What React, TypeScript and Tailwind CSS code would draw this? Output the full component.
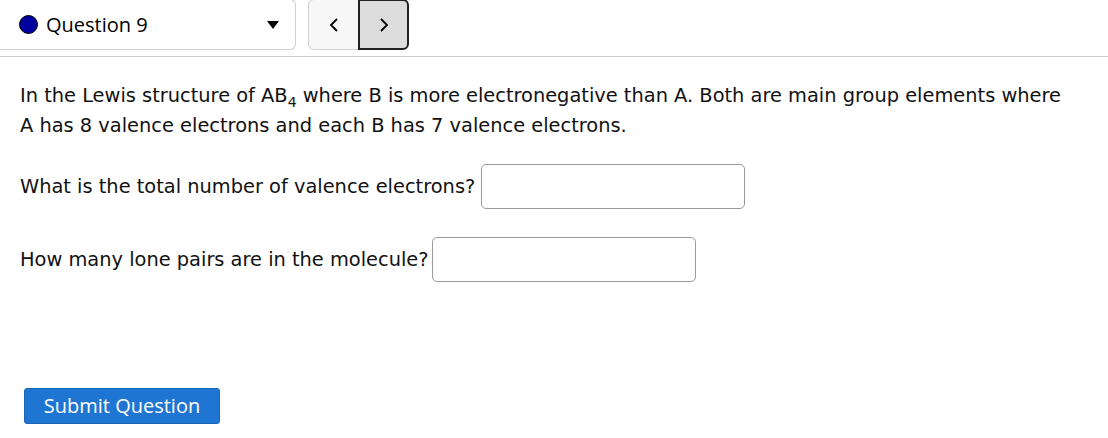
import React from "react";

export default function App() {
  return (
    <div className="w-[1108px] h-[438px] bg-white text-black overflow-hidden" style={{ fontFamily: "'Open Sans', 'Liberation Sans', sans-serif" }}>
      <div className="flex items-end h-[51px] -mt-px">
        <div className="w-[296px] h-[51px] border border-[#cfcfcf] border-l-0 rounded-r-[6px] rounded-bl-none flex items-center pl-[19px] pr-[16px]">
          <span className="w-[19px] h-[19px] rounded-full bg-[#00009e] border border-black shrink-0" />
          <span className="ml-[8px] text-[20px] text-black">Question 9</span>
          <span className="ml-auto">
            <svg width="12" height="10" viewBox="0 0 12 10"><path d="M0 1 L12 1 L6 9 Z" fill="#000" /></svg>
          </span>
        </div>
        <div className="ml-[12px] flex h-[51px]">
          <button className="w-[51px] h-[51px] border border-[#d0d0d0] bg-[#f7f7f7] rounded-l-[6px] flex items-center justify-center">
            <svg width="10" height="14" viewBox="0 0 10 14"><path d="M8 1 L2 7 L8 13" fill="none" stroke="#000" strokeWidth="1.8" /></svg>
          </button>
          <button className="w-[51px] h-[51px] border-2 border-[#222] bg-[#dcdcdc] rounded-r-[6px] -ml-px flex items-center justify-center">
            <svg width="10" height="14" viewBox="0 0 10 14"><path d="M2 1 L8 7 L2 13" fill="none" stroke="#000" strokeWidth="1.8" /></svg>
          </button>
        </div>
      </div>
      <div className="mt-[6px] h-px bg-[#cccccc]" />
      <div className="px-[20px] pt-[24px] text-[19.4px] leading-[30px] text-[#111]" style={{ fontFamily: "'DejaVu Sans', sans-serif" }}>
        <p className="w-[1045px]">
          In the Lewis structure of AB<span className="text-[14px] leading-none align-[-5px]">4</span> where B is more electronegative than A. Both are main group elements where A has 8 valence electrons and each B has 7 valence electrons.
        </p>
        <div className="mt-[23px] flex items-center">
          <span>What is the total number of valence electrons?</span>
          <input className="ml-[6px] w-[264px] h-[45px] border border-[#9a9a9a] rounded-[5px]" />
        </div>
        <div className="mt-[28px] flex items-center">
          <span>How many lone pairs are in the molecule?</span>
          <input className="ml-[3px] w-[264px] h-[45px] border border-[#9a9a9a] rounded-[5px]" />
        </div>
        <button className="mt-[106px] ml-[4px] w-[196px] h-[36px] bg-[#1f76d2] rounded-[3px] border border-[#1a66bb] text-white text-[20px] flex items-center justify-center" style={{ fontFamily: "'Open Sans', sans-serif" }}>
          Submit Question
        </button>
      </div>
    </div>
  );
}
